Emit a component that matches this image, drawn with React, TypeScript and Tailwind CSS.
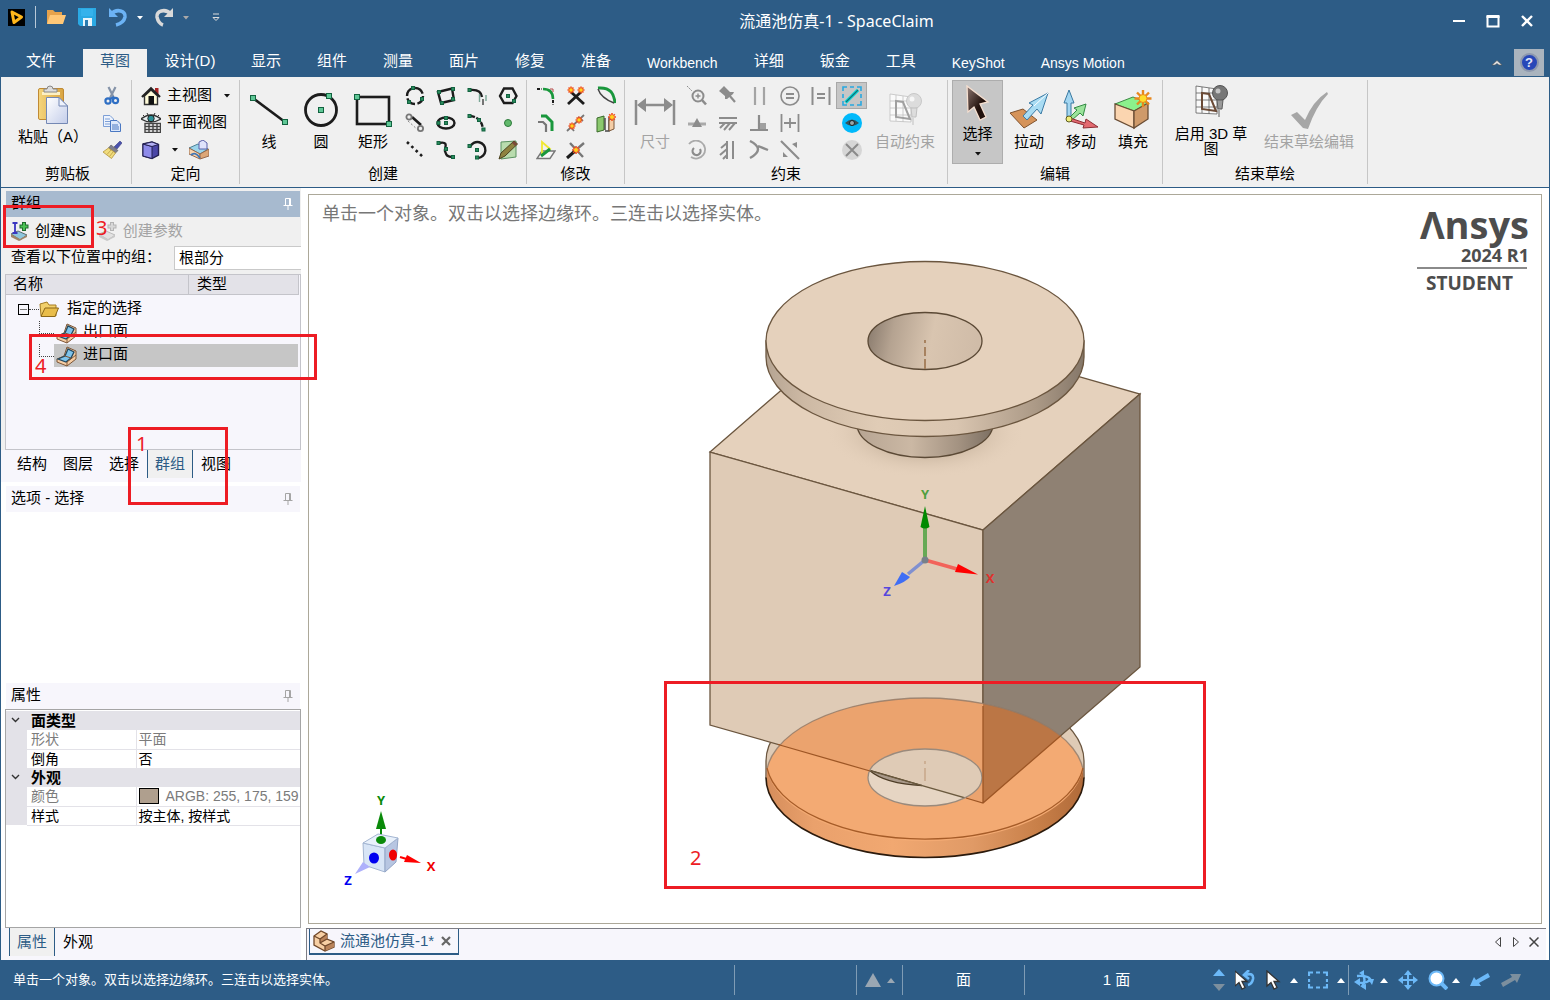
import type { ReactNode } from 'react'

type Kids = { children?: ReactNode }

const UI = "font-['Liberation_Sans','Noto_Sans_CJK_SC',sans-serif]"

/* ---------- small drawing helpers ---------- */

function Ico({ s = 20, v = 20, children }: { s?: number; v?: number } & Kids) {
  return (
    <svg width={s} height={s} viewBox={`0 0 ${v} ${v}`} fill="none" aria-hidden="true" className="shrink-0">
      {children}
    </svg>
  )
}

// green sketch handle
function H({ x, y, r = 1.5 }: { x: number; y: number; r?: number }) {
  return <rect x={x - r} y={y - r} width={r * 2} height={r * 2} fill={r > 2 ? '#5fc796' : '#2a8a5c'} stroke="#12623f" strokeWidth={1} />
}

function Caret({ up, color = '#111' }: { up?: boolean; color?: string }) {
  return (
    <svg width="8" height="5" viewBox="0 0 8 5" aria-hidden="true" className="shrink-0">
      <path d={up ? 'M0 5L4 0L8 5Z' : 'M1 1H7L4 4.5Z'} fill={color} />
    </svg>
  )
}

function Pin({ color }: { color: string }) {
  return (
    <svg width="10" height="12" viewBox="0 0 10 12" fill="none" stroke={color} aria-hidden="true">
      <path d="M2.5 7V.5H7.5V7M6.5 .5V7M.5 7.5H9.5M5 7.5V12" />
    </svg>
  )
}

function Burst({ x, y, r = 4 }: { x: number; y: number; r?: number }) {
  return (
    <g stroke="#f0501e" strokeWidth="1.6">
      <path d={`M${x - r} ${y}H${x + r}M${x} ${y - r}V${y + r}M${x - r * 0.7} ${y - r * 0.7}L${x + r * 0.7} ${y + r * 0.7}M${x + r * 0.7} ${y - r * 0.7}L${x - r * 0.7} ${y + r * 0.7}`} />
      <circle cx={x} cy={y} r={r * 0.5} fill="#ffd21e" stroke="none" />
    </g>
  )
}

/* ---------- ribbon icons ---------- */

const K = '#1c1c1c'
const G = '#8c8c8c'

const PasteIcon = () => (
  <Ico s={40} v={40}>
    <defs>
      <linearGradient id="clip" x2="1" y2="0"><stop stopColor="#f5d57c" /><stop offset="1" stopColor="#d9a441" /></linearGradient>
      <linearGradient id="sheet" x2="1" y2="1"><stop stopColor="#fff" /><stop offset="1" stopColor="#c3cdea" /></linearGradient>
    </defs>
    <rect x="5.5" y="3.5" width="25" height="31" rx="1.5" fill="url(#clip)" stroke="#c08a34" />
    <rect x="9" y="7" width="18" height="3" fill="#fdf0c4" />
    <path d="M11 7V4h3a3 3 0 0 1 6 0h4v3z" fill="#ddd" stroke="#888" />
    <path d="M13.5 12.5H26L34.5 21V38.5H13.5Z" fill="url(#sheet)" stroke="#7488b4" />
    <path d="M26 12.5V21H34.5Z" fill="#eef2fc" stroke="#7488b4" />
  </Ico>
)

const CutIcon = () => (
  <Ico>
    <path d="M6.5 1L12 12M13.5 1L8 12" stroke="#8593a8" strokeWidth="2.2" />
    <circle cx="6" cy="15" r="2.6" stroke="#2f6fc4" strokeWidth="2.2" />
    <circle cx="13.5" cy="14.5" r="2.6" stroke="#2f6fc4" strokeWidth="2.2" />
    <path d="M8 13L12 11" stroke="#2f6fc4" strokeWidth="2" />
  </Ico>
)

const CopyIcon = () => (
  <Ico>
    <path d="M1.5 2.5H8L11.500 6V13.5H1.5Z" fill="#edf3fd" stroke="#7d9fd6" />
    <path d="M3 6H8M3 8.5H8M3 11H8" stroke="#7d9fd6" />
    <path d="M8.5 7.5H15L18.500 11V18.5H8.5Z" fill="#dce8fb" stroke="#4a78c2" />
    <path d="M10 12H16M10 14H17M10 16H17" stroke="#4a78c2" />
  </Ico>
)

const BrushIcon = () => (
  <Ico>
    <path d="M12 7L18 1L20 3L15 9Z" fill="#4a52ad" stroke="#3c4080" strokeWidth=".6" />
    <path d="M9 5L16 10.5L13.5 13L6.5 8Z" fill="#80808e" stroke="#555" strokeWidth=".6" />
    <path d="M6.5 8L13.5 13L9.5 18.5L1 12Z" fill="#f0dc7d" stroke="#b4943a" strokeWidth=".8" />
    <path d="M5 14.5L9 10M7.5 16.5L11 12" stroke="#b4943a" strokeWidth=".7" />
  </Ico>
)

const HomeIcon = () => (
  <Ico>
    <rect x="14" y="2" width="3.5" height="7" fill="#a92525" />
    <path d="M3.5 10V18.5H16.5V10L10 4Z" fill="#fffbd9" stroke="#333" strokeWidth="1.4" />
    <path d="M1 11L10 2.5L19 11" stroke="#222" strokeWidth="2.4" />
    <rect x="7.5" y="10" width="5.5" height="8.5" fill="#111" />
  </Ico>
)

const PlanIcon = () => (
  <Ico>
    <path d="M0 6Q10 -2 20 6Q10 12 0 6Z" fill="#e8eef0" stroke="#333" strokeWidth="1.4" />
    <circle cx="10" cy="5.5" r="3.2" fill="#2c8f96" stroke="#222" />
    <path d="M2 2L4 4M6 0L7 2M14 0L13 2M18 2L16 4" stroke="#333" />
    <path d="M4 10.5H19.500V19.5H4ZM8 10.5V19.5M12 10.5V19.5M16 10.5V19.5M4 13.5H19.5M4 16.5H19.5" fill="#fff" stroke="#444" strokeWidth="1.4" />
  </Ico>
)

const CubeIcon = () => (
  <Ico>
    <path d="M2 4L11 2L17.5 4.5V15L11 18.5L2 16Z" fill="#4a46a8" stroke="#232052" strokeWidth="1.4" />
    <path d="M2 4L11 6.5V18.5L2 16Z" fill="#8e8bea" stroke="#232052" />
    <path d="M2 4L11 2L17.5 4.5L11 6.5Z" fill="#b3b0f4" stroke="#232052" />
  </Ico>
)

const SpinViewIcon = () => (
  <Ico>
    <path d="M0 8L9 4L19 9L11 14Z" fill="#9bd4ea" stroke="#4b7f96" />
    <path d="M0 8V14L11 19V14Z" fill="#f7d3ae" stroke="#96684a" />
    <path d="M11 14V19L20 16V9Z" fill="#dca676" stroke="#96684a" />
    <path d="M10 9V2L14 0L18 3V9Z" fill="#dfe3fb" stroke="#5a60a8" />
    <path d="M2 15Q6 11 11 18" stroke="#3b75b8" strokeWidth="1.8" />
  </Ico>
)

const LineIcon = () => (
  <Ico s={40} v={40}>
    <path d="M4 8L36 32" stroke={K} strokeWidth="2.6" />
    <H x={4} y={8} r={2.5} /><H x={36} y={32} r={2.5} />
  </Ico>
)
const CircleIcon = () => (
  <Ico s={40} v={40}>
    <circle cx="20" cy="20" r="15.5" stroke={K} strokeWidth="2.8" />
    <H x={20} y={20} r={2.5} /><H x={28} y={6} r={2.5} />
  </Ico>
)
const RectIcon = () => (
  <Ico s={40} v={40}>
    <rect x="4" y="7" width="32" height="27" stroke={K} strokeWidth="2.6" />
    <H x={4} y={7} r={2.5} /><H x={36} y={34} r={2.5} />
  </Ico>
)

const createTools: [string, ReactNode][] = [
  ['三点圆', <><circle cx="10" cy="10" r="8" stroke={K} strokeWidth="2.4" strokeDasharray="10 2.5" /><H x={8} y={2} /><H x={17} y={13} /><H x={4} y={16} /></>],
  ['三点矩形', <><path d="M2 6L16 2.5L18 14L5 17Z" stroke={K} strokeWidth="2.4" /><H x={3} y={6} /><H x={17} y={3} /><H x={17} y={13} /><H x={6} y={17} /></>],
  ['切线弧', <><path d="M3 4Q14 3 15 11" stroke={K} strokeWidth="2.4" /><path d="M12.5 8V16M19 9V15" stroke="#7aa796" strokeWidth="1.4" /><path d="M16 13V19" stroke="#555" strokeWidth="1.600" /><H x={2.5} y={4} /></>],
  ['多边形', <><path d="M6 2.5H14.5L18.5 10L14.5 17H6L2 10Z" stroke={K} strokeWidth="2.4" /><H x={10} y={10} /><H x={16} y={15} /></>],
  ['切线', <><path d="M7 4L16 12" stroke={K} strokeWidth="2.6" /><path d="M3 8L13 17" stroke="#888" strokeDasharray="2 2" /><circle cx="4" cy="4" r="2.6" stroke="#777" strokeWidth="1.8" /><circle cx="15.500" cy="15.500" r="2.6" stroke="#777" strokeWidth="1.8" /></>],
  ['椭圆', <><ellipse cx="10" cy="10" rx="8.5" ry="5.500" stroke={K} strokeWidth="2.4" /><H x={2.5} y={10} /><H x={10} y={10} /><H x={10} y={5} /></>],
  ['三点弧', <><path d="M3 3Q15 4 16 17" stroke={K} strokeWidth="2.4" strokeDasharray="5 1.5" /><H x={2.5} y={3} /><H x={12} y={7} /><H x={16.5} y={16.5} /></>],
  ['点', <circle cx="10" cy="10" r="3.5" fill="#62b96c" stroke="#2d7a3b" />],
  ['构造线', <path d="M2 2L18 17" stroke={K} strokeWidth="2.6" strokeDasharray="2.6 3.4" />],
  ['样条曲线', <><path d="M3 3C14 1 8 8 9 11S10 17 17 17" stroke={K} strokeWidth="2.4" /><H x={2.5} y={3} /><H x={10} y={9} /><H x={17} y={17} /></>],
  ['扫掠弧', <><path d="M3 7A8 8 0 1 1 11 18" stroke={K} strokeWidth="2.4" /><H x={2.5} y={6} /><H x={10} y={10} /><H x={10} y={17.5} /></>],
  ['面曲线', <><path d="M3 2L18 1V17L3 19Z" fill="#b9dcae" stroke="#5a9160" /><path d="M1 19L3 13L16 1L19.5 4L7 16Z" fill="#8e8340" stroke="#4a4220" /><path d="M16 1L19.5 4L17 6L14 3Z" fill="#7a4a38" /></>],
]

const modifyTools: [string, ReactNode][] = [
  ['圆角', <><path d="M1 3H6M17 14V19" stroke={K} strokeWidth="2" strokeDasharray="3 1.5" /><path d="M7 3Q17 3 17 13" stroke="#19973c" strokeWidth="2.6" /><path d="M14 3H17V6" stroke="#b84848" /></>],
  ['剪掉', <><path d="M2 18L15 6M18 18L5 6" stroke={K} strokeWidth="2.8" /><Burst x={5} y={4} r={3.5} /><Burst x={15} y={4} r={3.5} /></>],
  ['弯曲', <><path d="M2 2C15 1 18 8 19 17" stroke="#19973c" strokeWidth="3" /><path d="M2 3Q5 12 18 17" stroke="#444" strokeWidth="1.4" /></>],
  ['偏移曲线', <><path d="M5 3H10L16 9V18" stroke="#19973c" strokeWidth="3" /><path d="M2 9H7L10 12V19" stroke="#777" strokeWidth="2.2" /></>],
  ['分割曲线', <><path d="M1 18L18 2M4 13L8 18M12 4L17 8" stroke="#777" strokeWidth="1.8" /><Burst x={6} y={13} r={3.5} /><Burst x={13} y={7} r={3.5} /></>],
  ['投影', <><path d="M1 5L8 3V17L1 19Z" fill="#8bc86e" stroke="#3a6b2a" /><path d="M9 5V17M13 4V18H9" stroke="#444" strokeWidth="1.4" /><path d="M13 7L18 5V16L13 18Z" fill="#f4cda6" stroke="#7a5738" /><Burst x={16} y={4} r={4} /></>],
  ['投影到草图', <><path d="M6 11H19L14 18.5H1Z" fill="#f7f7f7" stroke="#777" strokeWidth="1.4" /><path d="M6 2V14L14 9Z" stroke="#f0e832" strokeWidth="1.800" /><path d="M5 16L14 9" stroke="#19973c" strokeWidth="3" /></>],
  ['延伸', <><path d="M1 18L9 11" stroke={K} strokeWidth="3" /><path d="M11 9L18 3M4 3L17 17" stroke="#777" strokeWidth="2.4" /><Burst x={10} y={10} r={4} /></>],
]

const constraintTools: [string, ReactNode][] = [
  ['放大', <><path d="M0 0L5 5" stroke={G} strokeDasharray="2 1" /><circle cx="11" cy="10" r="5.5" stroke={G} strokeWidth="2" /><path d="M15 14L19 18.5" stroke={G} strokeWidth="2.6" /><path d="M8.5 10H13.5M11 7.5V12.5" stroke={G} strokeWidth="1.400" /></>],
  ['固定', <><path d="M6 0L12 6L16 6L15 8L9 13L7 13L7 10L1 5Z" fill={G} /><path d="M11 9L17 16" stroke={G} strokeWidth="2.200" /></>],
  ['平行', <path d="M6 1V19M15 1V19" stroke="#a4a4a4" strokeWidth="2.2" />],
  ['等半径', <><circle cx="10" cy="10" r="9" stroke={G} strokeWidth="1.6" /><path d="M6 8H14M6 12H14" stroke={G} strokeWidth="2.2" /></>],
  ['等距离', <path d="M1.5 1V19M18.5 1V19M6 8H14M6 12H14" stroke={G} strokeWidth="2" />],
  ['中点', <><path d="M1 11H19" stroke="#aaa" strokeWidth="3" /><path d="M5 14L10 5L15 14Z" fill={G} /></>],
  ['水平', <path d="M1 5H19M1 10H19M7 10L2 15M12 10L6 17M17 10L11 17" stroke={G} strokeWidth="2" />],
  ['垂直', <><path d="M1 17H19M10 2V17" stroke={G} strokeWidth="2.2" /><rect x="11" y="10" width="6" height="6" fill="#a0a0a0" /></>],
  ['对称', <path d="M1.5 1V19M18.5 1V19M4 10H16M10 5V15" stroke={G} strokeWidth="1.8" />],
  ['同心', <><path d="M2 4A9 9 0 1 1 4 17" stroke="#aaa" strokeWidth="1.8" /><path d="M7 8A4 4 0 1 0 13 9" stroke={G} strokeWidth="2.2" /></>],
  ['竖直', <path d="M15 1V19M9 1V19M9 3L3 8M9 9L2 15M9 15L5 19" stroke={G} strokeWidth="2" />],
  ['相切', <path d="M1 1Q17 9 1 18M9 6L19 10" stroke={G} strokeWidth="2.4" />],
  ['共线', <><path d="M1 1L19 19" stroke={G} strokeWidth="2.2" /><path d="M12 4L17 2V8ZM3 12V17H8Z" fill={G} /></>],
]

// row by row, five to a row; the middle row has no fifth tool
const constraintRows: ([string, ReactNode] | null)[] = [...constraintTools.slice(0, 9), null, ...constraintTools.slice(9)]

const DimensionIcon = () => (
  <Ico s={44} v={44}>
    <path d="M3 12V37M41 12V37M8 17H36" stroke={G} strokeWidth="2.5" />
    <path d="M4 17L13 10V24ZM40 17L31 10V24Z" fill={G} />
  </Ico>
)

function SketchBulbIcon({ dim }: { dim?: boolean }) {
  const a = dim ? '#c0c0c0' : '#5d5d5d'
  return (
    <Ico s={40} v={40}>
      <path d="M5 4L26 7V32L5 31ZM5 11H26M5 18H26M5 25H26M11 5V31M18 6V32" stroke={a} strokeWidth=".8" fill="#fafafa" />
      <path d="M11 11L18 12L25 29L11 27Z" stroke={dim ? '#a0a0a0' : '#6b4a36'} strokeWidth="2" />
      <circle cx="29" cy="11" r="7.5" fill={dim ? '#dcdcdc' : '#777'} stroke={dim ? '#c8c8c8' : '#555'} />
      <circle cx="27" cy="9" r="2.5" fill={dim ? '#f6f6f6' : '#c4c4c4'} />
      <path d="M26 18H32L31 27H27ZM28 28V35" fill={dim ? '#ddd' : '#999'} stroke={a} />
    </Ico>
  )
}

const SelectIcon = () => (
  <Ico s={36} v={36}>
    <defs><linearGradient id="cur" x2="1" y2="1"><stop stopColor="#8e7770" /><stop offset=".6" stopColor="#22110c" /></linearGradient></defs>
    <path d="M7 1L8 27L14 22L20 35L26 32L20 19L28 17Z" fill="url(#cur)" stroke="#f5dfd0" strokeWidth="1.3" />
  </Ico>
)
const PullIcon = () => (
  <Ico s={40} v={40}>
    <path d="M1 23L14 19L28 30L15 38Z" fill="#d5935a" stroke="#80532f" />
    <path d="M14 26L24 15L20 13L39 3L32 24L28 19L18 30Z" fill="#a9dcf3" stroke="#3c7ba5" />
    <path d="M39 3L25 16" stroke="#fff" />
  </Ico>
)
const MoveIcon = () => (
  <Ico s={40} v={40}>
    <path d="M6 28V13H3L8 0L13 13H10V28Z" fill="#a3d6f1" stroke="#3878a0" />
    <path d="M9 27L16 20L13 18L25 14L22 26L19 23L11 30Z" fill="#9be39b" stroke="#328a44" />
    <path d="M9 28L24 33L25 29L37 37L22 38L23 35L9 31Z" fill="#e36a70" stroke="#8d2d34" />
    <circle cx="8" cy="29" r="3" fill="#f1ee7c" stroke="#5c5a1e" />
  </Ico>
)
const FillIcon = () => (
  <Ico s={40} v={40}>
    <path d="M2 14L20 7L35 13L21 21Z" fill="#8bf08c" stroke="#3d8a45" />
    <path d="M2 14L21 21V38L2 29Z" fill="#fbd5b0" stroke="#6a4d35" strokeWidth="1.3" />
    <path d="M21 21L35 13V29L21 38Z" fill="#cf9a6a" stroke="#6a4d35" strokeWidth="1.3" />
    <path d="M30 0V17M21.5 8.5H38.5M24 2.5L36 14.5M36 2.5L24 14.5" stroke="#e8871c" strokeWidth="2.4" />
    <circle cx="30" cy="8.500" r="4" fill="#ffdc28" stroke="#e8871c" />
  </Ico>
)
const CheckIcon = () => (
  <Ico s={40} v={40}>
    <path d="M2 25L8 22L16 30Q24 11 38 2L39 4Q27 16 19 39L14 38Z" fill="#a6a6a6" />
  </Ico>
)

/* ---------- ribbon building blocks ---------- */

function Group({ label, width, children }: { label: string; width: string } & Kids) {
  return (
    <section className={`flex h-[104px] shrink-0 flex-col border-r border-[#c6c6c6] ${width}`}>
      <div className="flex h-[84px]">{children}</div>
      <h2 className="text-center text-[15px] leading-[20px]">{label}</h2>
    </section>
  )
}

function Big({ icon, label, width = 'w-[52px]', pad = 'pt-[10px]', dim }: { icon: ReactNode; label: string; width?: string; pad?: string; dim?: boolean }) {
  return (
    <button className={`flex shrink-0 flex-col items-center ${pad} ${width} ${dim ? 'text-[#a3a3a3]' : ''}`}>
      <span className="flex h-10 items-center">{icon}</span>
      <span className="text-[15px] leading-[24px] whitespace-nowrap">{label}</span>
    </button>
  )
}

function ToolGrid({ tools, cols }: { tools: ([string, ReactNode] | null)[]; cols: string }) {
  return (
    <div className={`grid auto-rows-[27px] pt-[2px] ${cols}`}>
      {tools.map((t, i) =>
        t ? (
          <button key={i} aria-label={t[0]} className="flex items-center justify-center">
            <Ico>{t[1]}</Ico>
          </button>
        ) : (
          <span key={i} />
        ),
      )}
    </div>
  )
}

function Ribbon() {
  return (
    <div className="flex h-[111px] shrink-0 overflow-hidden border-b border-[#2d5c86] bg-[#f0f0f0] pt-[3px]">
      <Group label="剪贴板" width="w-[131px] pl-[3px]">
        <Big icon={<PasteIcon />} label="粘贴（A）" width="ml-1 w-[90px]" pad="pt-[5px]" />
        <div className="grid w-[28px] auto-rows-[27px] pt-[2px]">
          <button aria-label="剪切" className="flex items-center justify-center"><CutIcon /></button>
          <button aria-label="复制" className="flex items-center justify-center"><CopyIcon /></button>
          <button aria-label="格式刷" className="flex items-center justify-center"><BrushIcon /></button>
        </div>
      </Group>

      <Group label="定向" width="w-[108px]">
        <div className="grid auto-rows-[27px] pt-[2px] pl-[9px] text-[15px]">
          <button className="flex items-center gap-[6px]">
            <HomeIcon />主视图<span className="ml-[5px]"><Caret /></span>
          </button>
          <button className="flex items-center gap-[6px] whitespace-nowrap"><PlanIcon />平面视图</button>
          <div className="flex items-center gap-[10px]">
            <button aria-label="等轴测" className="flex items-center gap-[10px]"><CubeIcon /><Caret /></button>
            <button aria-label="转动视图"><SpinViewIcon /></button>
          </div>
        </div>
      </Group>

      <Group label="创建" width="w-[287px]">
        <div className="flex pl-[3px]">
          <Big icon={<LineIcon />} label="线" />
          <Big icon={<CircleIcon />} label="圆" />
          <Big icon={<RectIcon />} label="矩形" />
        </div>
        <ToolGrid tools={createTools} cols="grid-cols-[repeat(4,31px)]" />
      </Group>

      <Group label="修改" width="w-[98px]">
        <div className="pl-1">
          <ToolGrid tools={modifyTools} cols="grid-cols-[repeat(3,30px)]" />
        </div>
      </Group>

      <Group label="约束" width="w-[323px]">
        <Big icon={<DimensionIcon />} label="尺寸" width="w-[56px] pl-1" dim />
        <ToolGrid tools={constraintRows} cols="grid-cols-[repeat(5,31px)]" />
        <div className="grid w-[31px] auto-rows-[27px] pt-[2px]">
          <button aria-label="约束捕捉" className="flex items-center justify-center border border-[#a8a8a8] bg-[#c6c6c6]">
            <Ico>
              <path d="M5 1H1V5M15 1H19V5M5 19H1V15M15 19H19V15M1 8V12M19 8V12M8 1H12M8 19H12" stroke="#29a8e0" strokeWidth="1.6" />
              <path d="M3.5 16.5L16 4" stroke="#10d8d8" strokeWidth="3.5" />
              <path d="M4 16L16 4" stroke="#0b7378" strokeWidth="1.2" />
            </Ico>
          </button>
          <button aria-label="显示约束" className="flex items-center justify-center">
            <Ico>
              <circle cx="10" cy="10" r="10" fill="#00b9fb" />
              <path d="M3 10Q10 3 17 10Q10 16 3 10Z" fill="#35525c" />
              <circle cx="10" cy="10" r="2.5" fill="#9aa5a8" stroke="#16272c" />
            </Ico>
          </button>
          <button aria-label="删除约束" className="flex items-center justify-center">
            <Ico>
              <circle cx="10" cy="10" r="10" fill="#d6d6d6" />
              <path d="M4 4L16 16M16 4L4 16" stroke="#8a8a8a" strokeWidth="2" />
            </Ico>
          </button>
        </div>
        <Big icon={<SketchBulbIcon dim />} label="自动约束" width="w-[76px]" dim />
      </Group>

      <Group label="编辑" width="w-[215px]">
        <div className="flex pl-1">
          <button className="flex h-[84px] w-[51px] flex-col items-center border border-[#adadad] bg-[#c6c6c6] pt-1 text-[15px]">
            <SelectIcon />
            <span className="leading-[26px]">选择</span>
            <span className="flex h-3 items-center"><Caret /></span>
          </button>
          <Big icon={<PullIcon />} label="拉动" />
          <Big icon={<MoveIcon />} label="移动" />
          <Big icon={<FillIcon />} label="填充" />
        </div>
      </Group>

      <Group label="结束草绘" width="w-[205px]">
        <button className="flex w-[96px] flex-col items-center pt-[2px] text-[15px] leading-[15px]">
          <SketchBulbIcon />
          <span className="mt-1 whitespace-nowrap">启用 3D 草<br />图</span>
        </button>
        <Big icon={<CheckIcon />} label="结束草绘编辑" width="w-[100px]" dim />
      </Group>
    </div>
  )
}

/* ---------- title bar and tabs ---------- */

const iconBtn = 'flex items-center justify-center'

function TitleBar() {
  return (
    <header className="flex h-[42px] shrink-0 items-center text-white">
      <div className="flex h-[34px] w-[230px] items-center self-start pl-[7px]">
        <svg width="17" height="17" viewBox="0 0 17 17" aria-hidden="true">
          <rect width="17" height="17" fill="#000" />
          <path d="M4 3L13.5 8L6 13.5Z" fill="none" stroke="#ffb71b" strokeWidth="3" strokeLinejoin="round" />
        </svg>
        <span className="ml-[10px] h-[22px] w-px bg-[#b9c9d8]" />
        <button aria-label="打开" className={`${iconBtn} ml-[10px]`}>
          <Ico>
            <path d="M1 17V3H7L9 5H16V8" fill="#e6a24c" />
            <path d="M1 17L4 8H20L17 17Z" fill="#ffc777" />
          </Ico>
        </button>
        <button aria-label="保存" className={`${iconBtn} ml-[12px]`}>
          <Ico s={18} v={18}>
            <path d="M0 0H18V18H2L0 16Z" fill="#2aa9e4" />
            <rect x="3" y="1" width="12" height="7" fill="#35b2ec" />
            <rect x="5" y="10" width="9" height="8" fill="#e8f4fb" />
            <rect x="7" y="12" width="3" height="6" fill="#2a7bb0" />
          </Ico>
        </button>
        <button aria-label="撤销" className={`${iconBtn} ml-[12px] gap-[8px]`}>
          <Ico>
            <path d="M3 7C9 1 18 4 17 10C16 15 12 17 8 18" stroke="#6cb3f5" strokeWidth="3.6" />
            <path d="M1 1V10H10Z" fill="#6cb3f5" />
          </Ico>
          <Caret color="#fff" />
        </button>
        <button aria-label="重做" className={`${iconBtn} ml-[10px] gap-[8px]`}>
          <Ico>
            <path d="M17 7C11 1 2 4 3 10C4 15 6 17 9 18" stroke="#d9d9d9" strokeWidth="3.6" />
            <path d="M19 1V10H10Z" fill="#d9d9d9" />
          </Ico>
          <Caret color="#a9a9a9" />
        </button>
        <button aria-label="自定义快速访问工具栏" className={`${iconBtn} ml-[21px]`}>
          <Ico s={10} v={10}>
            <path d="M2 2H8M2 5.5H8L5 8.5Z" stroke="#ddd" />
          </Ico>
        </button>
      </div>
      <h1 className="min-w-0 flex-1 text-center font-['Noto_Sans','Noto_Sans_CJK_SC',sans-serif] text-[16px]">流通池仿真-1 - SpaceClaim</h1>
      <div className="flex w-[107px]">
        <button aria-label="最小化" className={`${iconBtn} w-[34px]`}>
          <Ico s={14} v={14}><path d="M1 7H13" stroke="#fff" strokeWidth="2" /></Ico>
        </button>
        <button aria-label="最大化" className={`${iconBtn} w-[34px]`}>
          <Ico s={14} v={14}><path d="M1.5 2V12.5H12.500V2" stroke="#fff" strokeWidth="2" /><path d="M.5 2.5H13.5" stroke="#fff" strokeWidth="3" /></Ico>
        </button>
        <button aria-label="关闭" className={`${iconBtn} w-[34px]`}>
          <Ico s={14} v={14}><path d="M2 2L12 12M12 2L2 12" stroke="#fff" strokeWidth="2.400" /></Ico>
        </button>
      </div>
    </header>
  )
}

const tabs = ['显示', '组件', '测量', '面片', '修复', '准备', 'Workbench', '详细', '钣金', '工具', 'KeyShot', 'Ansys Motion']

function RibbonTabs() {
  return (
    <nav className="mt-[7px] flex h-7 shrink-0 items-stretch text-white">
      <button className="mr-[9px] ml-[7px] w-[66px] pb-1 text-[15px]">文件</button>
      <button className="w-16 bg-[#f0f0f0] pb-1 text-[15px] text-[#2d5c86]">草图</button>
      <button className="w-[86px] pb-1 text-[15px]">设计(D)</button>
      {tabs.map((t) => (
        <button key={t} className={`px-[18px] whitespace-nowrap ${/^[A-Z]/.test(t) ? 'text-sm' : 'pb-1 text-[15px]'}`}>{t}</button>
      ))}
      <span className="flex-1" />
      <button aria-label="折叠功能区" className={`${iconBtn} mr-[12px]`}>
        <Ico s={10} v={10}><path d="M0 7L5 2.5L10 7H7L5 5.500L3 7Z" fill="#e6e6e6" stroke="#555" strokeWidth=".6" /></Ico>
      </button>
      <button aria-label="帮助" className={`${iconBtn} mr-[5px] h-[27px] w-[30px] bg-[#aab4be]`}>
        <span className="flex h-[19px] w-[19px] items-center justify-center rounded-full border-2 border-[#8d98ae] bg-[#2747b8] text-[13px] leading-none font-bold text-[#e4e9fb]">?</span>
      </button>
    </nav>
  )
}

/* ---------- left side ---------- */

function PaneTitle({ text, active }: { text: string; active?: boolean }) {
  return (
    <div className={`ml-[5px] mr-px flex h-[26px] shrink-0 items-center justify-between pr-[7px] pl-[5px] text-[15px] ${active ? 'bg-[#a7bacf]' : 'bg-[#f7f6fc]'}`}>
      <h2 className="pb-[3px] leading-[22px]">{text}</h2>
      <button aria-label="固定窗格"><Pin color={active ? '#fff' : '#a5a5a5'} /></button>
    </div>
  )
}

const CreateNsIcon = ({ dim }: { dim?: boolean }) => (
  <Ico>
    <path d="M1 13L8 10L17 14L10 19Z" fill={dim ? '#e2e2e2' : '#8ec6dd'} stroke={dim ? '#bbb' : '#5a6a70'} />
    <path d="M1 13V16L9 20L17 16V14L10 18Z" fill={dim ? '#c9c9c9' : '#a08468'} />
    {!dim && <path d="M2.5 2H7.5M5 2V12M2.5 12H7.5" stroke="#3a36c0" strokeWidth="1.8" />}
    <path d="M14 1V10M9.5 5.500H18.5" stroke={dim ? '#b4b4b4' : '#1f6b2c'} strokeWidth="4" />
    <path d="M14 2V9M10.5 5.500H17.5" stroke={dim ? '#d8d8d8' : '#4ac254'} strokeWidth="2" />
  </Ico>
)

const FolderIcon = () => (
  <Ico>
    <path d="M1 4L8 2L10 5H17V16H2Z" fill="#f2d06b" stroke="#a47b22" />
    <path d="M2 16.5L6 8H19.5L16 16.5Z" fill="#e9bd4a" stroke="#8c6718" />
  </Ico>
)

const FaceIcon = () => (
  <Ico s={22} v={22}>
    <path d="M1 14L8 11L11 2L20 6V14L11 21L1 17Z" fill="#f6cda4" stroke="#7d5637" />
    <path d="M2 14L9 11L12 4L18 7L15 13L10 17Z" fill="#7fc4ec" stroke="#23485f" strokeWidth="1.3" />
    <path d="M9 11L15 13M11 21V17L20 10" stroke="#7d5637" />
  </Ico>
)

function BottomTab({ label, active }: { label: string; active?: boolean }) {
  return (
    <button className={`h-7 w-[46px] text-[15px] leading-[24px] ${active ? 'border-x border-[#2d5c86] bg-[#f0f0f0] text-[#2d5c86]' : ''}`}>{label}</button>
  )
}

function Mark({ box, n, num }: { box: string; n: string; num: string }) {
  return (
    <div className={`pointer-events-none absolute z-10 border-3 border-[#ed1c24] ${box}`}>
      <span className={`absolute font-['Noto_Sans'] text-[20px] leading-[22px] text-[#ed1c24] ${num}`}>{n}</span>
    </div>
  )
}

function GroupsPane() {
  return (
    <section className="flex h-[294px] shrink-0 flex-col bg-[#f0f0f0] pt-[3px]">
      <PaneTitle text="群组" active />
      <div className="flex h-[28px] items-center pl-[9px] text-[15px]">
        <button className="flex items-center gap-[5px]"><CreateNsIcon />创建NS</button>
        <button className="ml-[12px] flex items-center gap-[5px] text-[#a3a3a3]" disabled><CreateNsIcon dim />创建参数</button>
      </div>
      <div className="flex h-[25px] items-center pl-[10px] text-[15px]">
        <label htmlFor="scope" className="w-[163px] whitespace-nowrap">查看以下位置中的组：</label>
        <select id="scope" className="h-6 min-w-0 flex-1 appearance-none border border-r-0 border-[#c9c9c9] bg-white px-1 leading-[20px]">
          <option>根部分</option>
        </select>
      </div>
      <div className="mt-1 ml-1 flex h-[176px] flex-col border border-[#c4c4ca] bg-[#f7f6fc] text-[15px]">
        <div className="mr-px flex h-5 shrink-0 border-b border-[#c4c4ca] bg-[#e3e2e8] leading-[18px]">
          <span className="w-[183px] border-r border-[#c4c4ca] pl-[7px]">名称</span>
          <span className="flex-1 border-r border-[#c4c4ca] pl-2">类型</span>
        </div>
        <ul className="pt-[3px] pl-[12px]">
          <li>
            <div className="flex h-[23px] items-center">
              <span className="flex h-[11px] w-[11px] items-center justify-center border border-black"><i className="h-px w-[7px] bg-[#777]" /></span>
              <span className="w-[10px] border-t border-dotted border-[#444]" />
              <FolderIcon />
              <span className="ml-2 pb-[2px]">指定的选择</span>
            </div>
            <ul className="ml-[21px]">
              {['出口面', '进口面'].map((name, i) => (
                <li key={name} className="flex h-[23px] items-start">
                  <span className="h-[13px] w-[15px] shrink-0 border-b border-l border-dotted border-[#444]" />
                  <span className={`mr-[2px] flex h-full flex-1 items-center pl-[2px] ${i ? 'bg-[#c6c6c6]' : ''}`}>
                    <FaceIcon /><span className="ml-[5px] pb-[3px]">{name}</span>
                  </span>
                </li>
              ))}
            </ul>
          </li>
        </ul>
      </div>
      <div className="flex h-8 items-start bg-[#f7f6fc] pl-[8px]">
        <BottomTab label="结构" /><BottomTab label="图层" /><BottomTab label="选择" /><BottomTab label="群组" active /><BottomTab label="视图" />
      </div>
    </section>
  )
}

const props: { group: string; rows: [string, string, boolean][] }[] = [
  { group: '面类型', rows: [['形状', '平面', true], ['倒角', '否', false]] },
  { group: '外观', rows: [['颜色', 'ARGB: 255, 175, 159', true], ['样式', '按主体, 按样式', false]] },
]

function PropertiesPane() {
  return (
    <section className="flex h-[277px] shrink-0 flex-col">
      <PaneTitle text="属性" />
      <div className="ml-1 h-[219px] overflow-hidden border border-[#a5a5a5] bg-white pt-px">
        <table className="w-full table-fixed border-collapse text-sm">
          <colgroup><col className="w-[21px]" /><col className="w-[109px]" /><col /></colgroup>
          {props.map((p) => (
            <tbody key={p.group}>
              <tr className="h-[19px] bg-[#e3e2e8]">
                <td className="p-0">
                  <svg width="18" height="8" viewBox="0 0 18 8" fill="none" aria-hidden="true"><path d="M6 1L9.5 4.5L13 1" stroke="#333" strokeWidth="1.4" /></svg>
                </td>
                <th colSpan={2} className="p-0 pl-1 text-left text-[15px] leading-[18px] font-bold">{p.group}</th>
              </tr>
              {p.rows.map(([k, v, dim]) => (
                <tr key={k} className={`h-[19px] ${dim ? 'text-[#7b7b7b]' : ''}`}>
                  <td className="bg-[#e3e2e8] p-0" />
                  <td className="border-r border-b border-[#e3e2e8] p-0 pl-1 leading-[18px]">{k}</td>
                  <td className="border-b border-[#e3e2e8] p-0 pl-[2px] leading-[18px] whitespace-nowrap">
                    {k === '颜色' ? (
                      <span className="flex items-center gap-[7px]"><i className="h-4 w-5 shrink-0 border border-black bg-[#af9f8e]" />{v}</span>
                    ) : v}
                  </td>
                </tr>
              ))}
            </tbody>
          ))}
        </table>
      </div>
      <div className="flex h-8 items-start bg-[#f7f6fc] pl-[8px]">
        <BottomTab label="属性" active /><BottomTab label="外观" />
      </div>
    </section>
  )
}

/* ---------- 3D view ---------- */

const TOP_RIM = 'M766 768Q768 775 772 783A159 80 0 0 0 1078 783Q1082 775 1084 768V777.5A159 80 0 0 1 766 777.5Z'
const RING = 'M766 777.5A159 79.5 0 1 1 1084 777.5A159 79.5 0 1 1 766 777.5ZM868 777.5A57 28.5 0 1 0 982 777.5A57 28.5 0 1 0 868 777.5Z'
const FRONT = 'M710 452L983 530V803L710 725Z'
const SIDE = 'M983 530L1140 394V667L983 803Z'

function Model() {
  return (
    <svg width="450" height="620" viewBox="700 250 450 620" fill="none" role="img" aria-label="流通池" strokeWidth="1.3" className="shrink-0">
      <defs>
        <linearGradient id="rim" x2="1" y2="0"><stop stopColor="#b5a492" /><stop offset=".12" stopColor="#cdb9a4" /><stop offset=".35" stopColor="#e0ccb6" /><stop offset=".6" stopColor="#d9c5b0" /><stop offset=".85" stopColor="#ab9986" /><stop offset="1" stopColor="#857769" /></linearGradient>
        <linearGradient id="bore" x2="1" y2=".1"><stop stopColor="#85776a" /><stop offset=".25" stopColor="#b5a391" /><stop offset=".6" stopColor="#d9c5b0" /><stop offset="1" stopColor="#d0bca8" /></linearGradient>
        <linearGradient id="neck" x2="1" y2="0"><stop stopColor="#b7a593" /><stop offset=".4" stopColor="#cbb8a4" /><stop offset=".75" stopColor="#a39281" /><stop offset="1" stopColor="#7c6f62" /></linearGradient>
        <linearGradient id="hotRim" x2="1" y2="0"><stop stopColor="#d58d5b" /><stop offset=".15" stopColor="#eaa16c" /><stop offset=".4" stopColor="#f1a871" /><stop offset=".65" stopColor="#e09a66" /><stop offset=".85" stopColor="#c98049" /><stop offset="1" stopColor="#b06a39" /></linearGradient>
        <radialGradient id="shade"><stop offset=".5" stopColor="#bda993" /><stop offset="1" stopColor="#e5d1bc" stopOpacity="0" /></radialGradient>
        <clipPath id="cf"><path d={FRONT} /></clipPath>
        <clipPath id="cs"><path d={SIDE} /></clipPath>
        <clipPath id="ch"><ellipse cx="925" cy="777.5" rx="57" ry="28.5" /></clipPath>
        <clipPath id="ctop"><path d="M710 452L867 316L1140 394L983 530Z" /></clipPath>
      </defs>

      {/* lower flange behind the block */}
      <path d="M766 777.5V761A159 80 0 0 1 1084 761V777.5Z" fill="#dfcbb6" stroke="#6b563f" />
      {/* block */}
      <path d="M710 452L867 316L1140 394L983 530Z" fill="#e5d1bc" stroke="#6b563f" />
      <g clipPath="url(#ctop)"><ellipse cx="925" cy="432" rx="100" ry="46" fill="url(#shade)" opacity=".6" /></g>
      <path d={FRONT} fill="#dfcbb6" stroke="#6b563f" />
      <path d={SIDE} fill="#8f8173" stroke="#6b563f" />
      {/* selected face */}
      <path d={RING} fill="#f3aa73" fillRule="evenodd" />
      <path d={RING} fill="#eba36e" fillRule="evenodd" clipPath="url(#cf)" />
      <path d={RING} fill="#bb7645" fillRule="evenodd" clipPath="url(#cs)" />
      <g clipPath="url(#ch)">
        <rect x="860" y="740" width="130" height="75" fill="#e6d5c3" />
        <path d={FRONT} fill="#dfcbb6" />
        <path d="M869 770Q885 784 922 785.5Z" fill="#a9998a" stroke="#4e3d26" />
        <path d="M710 725L983 803" stroke="#6b5a3f" />
      </g>
      <path d={TOP_RIM} fill="url(#hotRim)" />
      <path d="M766 777.5A159 79.5 0 0 1 1084 777.5" stroke="#8a7768" strokeOpacity=".75" />
      <path d="M766 777.5A159 80 0 0 0 1084 777.5" stroke="#2b1a0c" strokeWidth="1.6" />
      <path d="M767 768A159 80 0 0 0 1083 768" stroke="#a65c28" />
      <ellipse cx="925" cy="777.5" rx="57" ry="28.5" stroke="#9a8a7c" />
      <path d="M778 744.500L870 771M966 798L983 803L1061 735.5M983 803V706" stroke="#9d5625" />
      <path d="M925 761V764M925 768V781" stroke="#c9a98c" strokeWidth="1.6" />

      {/* neck and upper flange */}
      <path d="M857 424A68 33.5 0 0 0 993 424Z" fill="url(#neck)" stroke="#5b4935" />
      <path d="M766 341V357A159 79.5 0 0 0 1084 357V341Z" fill="url(#rim)" stroke="#6b563f" />
      <ellipse cx="925" cy="341" rx="159" ry="79.5" fill="#e5d1bc" stroke="#6b563f" />
      <ellipse cx="925" cy="341" rx="57" ry="28.5" fill="url(#bore)" stroke="#5b4935" />
      <path d="M925 340V343M925 347V356M925 359V369" stroke="#a37c58" strokeWidth="1.8" />

      {/* origin triad */}
      <path d="M925 560V528" stroke="#67a955" strokeWidth="4" />
      <path d="M925 506L929.5 527Q925 530 920.5 527Z" fill="#008a00" />
      <path d="M925 560L957 569" stroke="#f2635a" strokeWidth="3.5" />
      <path d="M978 574.5L955 572L958 564Z" fill="#f00" />
      <path d="M925 560L908 574" stroke="#8090d0" strokeWidth="3.5" />
      <path d="M894 586L902 572L910 577Q906 582 894 586Z" fill="#3f6ef5" />
      <circle cx="925" cy="560" r="3.5" fill="#77808a" />
      <g className="font-['Open_Sans',sans-serif] text-[13px] font-bold" textAnchor="middle">
        <text x="925" y="499" fill="#4f9f3f">Y</text>
        <text x="990" y="583" fill="#e0302c">X</text>
        <text x="887" y="596" fill="#5648dc">Z</text>
      </g>
    </svg>
  )
}

function ViewTriad() {
  return (
    <svg width="100" height="100" viewBox="340 790 100 100" fill="none" aria-hidden="true" className="absolute bottom-[33px] left-[31px]">
      <path d="M381 850V826" stroke="#0a8a0a" strokeWidth="2" />
      <path d="M381 811L386 829H376Z" fill="#0a8a0a" />
      <path d="M363 843L385 848V872L364 865Z" fill="#d8e5f6" stroke="#a4b6d2" />
      <path d="M385 848L398 838L396 862L385 872Z" fill="#b7c6e2" stroke="#93a5c6" />
      <path d="M363 843L378 834L398 838L385 848Z" fill="#e9f1fb" stroke="#a4b6d2" />
      <ellipse cx="381" cy="840" rx="5" ry="4" fill="#0a8a0a" />
      <ellipse cx="374" cy="858" rx="5" ry="5.5" fill="#0000f0" />
      <ellipse cx="393" cy="855" rx="4" ry="5.5" fill="#f00000" />
      <path d="M400 857L410 860" stroke="#f00" strokeWidth="2" />
      <path d="M421 863L404 862L407 855Z" fill="#f00" />
      <path d="M355 874L363 862L370 867Z" fill="#aeb0fb" />
      <g className="font-['Open_Sans',sans-serif] text-[13px] font-bold" textAnchor="middle">
        <text x="381" y="805" fill="#0a8a0a">Y</text>
        <text x="431" y="871" fill="#f00000">X</text>
        <text x="348" y="885" fill="#0000f0">Z</text>
      </g>
    </svg>
  )
}

function Viewport() {
  return (
    <main className="relative mx-[7px] mt-[6px] flex min-h-0 flex-1 items-center justify-center overflow-hidden border border-[#aca899] bg-white pt-[2px]">
      <Model />
      <p className="absolute top-[6px] left-[13px] text-[18px] leading-[26px] text-[#777]">单击一个对象。双击以选择边缘环。三连击以选择实体。</p>
      <div className="absolute top-[9px] right-[12px] flex w-[112px] flex-col items-end font-['Open_Sans','Noto_Sans',sans-serif] font-bold text-[#4d4d4d]">
        <span aria-label="Ansys" className="text-[38px] leading-[40px]">Λnsys</span>
        <span className="text-lg leading-[22px]">2024 R1</span>
        <span className="mt-[1px] mr-[2px] h-[2px] w-[110px] bg-[#8a8a8a]" />
        <span className="mr-[16px] text-[19px] leading-[29px]">STUDENT</span>
      </div>
      <ViewTriad />
      <Mark box="left-[355px] top-[486px] h-[208px] w-[542px]" n="2" num="left-[23px] top-[163px]" />
    </main>
  )
}

function DocumentTabs() {
  return (
    <div className="mr-[3px] ml-[5px] flex h-8 shrink-0 items-start border-t border-l border-[#7d7d85] bg-[#f7f6fc]">
      <div className="ml-[2px] flex h-[26px] w-[150px] items-center border-x border-b-2 border-[#2d5c86] pl-[3px] text-[15px] text-[#2d5c86]">
        <Ico s={22} v={22}>
          <path d="M1 6L8 1L14 4V9L21 12V17L12 21L1 15Z" fill="#f7cfa4" stroke="#70482a" strokeWidth="1.3" />
          <path d="M12 16L21 12V17L12 21ZM7 9L14 4V9L7 13Z" fill="#b9835a" />
          <path d="M1 6L7 9L14 4M7 9V13L12 16L21 12M12 16V21M7 13L14 9" stroke="#70482a" strokeWidth="1.3" />
        </Ico>
        <button className="ml-[5px] whitespace-nowrap">流通池仿真-1*</button>
        <button aria-label="关闭文档" className="ml-[7px]"><Ico s={10} v={10}><path d="M1 1L9 9M9 1L1 9" stroke="#666" strokeWidth="2.2" /></Ico></button>
      </div>
      <span className="flex-1" />
      <div className="flex h-[25px] items-center gap-[8px] pr-[7px]">
        <button aria-label="上一个"><Ico s={10} v={10}><path d="M7.5 .5V9.5L2.5 5Z" stroke="#444" /></Ico></button>
        <button aria-label="下一个"><Ico s={10} v={10}><path d="M2.5 .5V9.5L7.5 5Z" stroke="#444" /></Ico></button>
        <button aria-label="关闭"><Ico s={10} v={10}><path d="M.5 .5L9.5 9.5M9.5 .5L.5 9.5" stroke="#444" strokeWidth="1.5" /></Ico></button>
      </div>
    </div>
  )
}

/* ---------- status bar ---------- */

const B = '#6cb9f8'
const Cursor = () => <path d="M3 1V16L7 12.5L10 19L13 17.5L10 11.5H15Z" fill="#fff" stroke="#333" strokeWidth="1.3" />

function StatusBar() {
  const sep = 'h-[30px] border-l border-[#7f9cb5]'
  return (
    <footer className="flex h-10 shrink-0 items-center text-white">
      <p className="min-w-0 flex-1 truncate pl-3 text-[13px]">单击一个对象。双击以选择边缘环。三连击以选择实体。</p>
      <span className={`${sep} w-[122px]`} />
      <button aria-label="消息" className={`${sep} ${iconBtn} w-[46px] gap-[5px]`}>
        <Ico s={18} v={18}><path d="M9 2L17 16H1Z" fill="#9aa7b3" /></Ico><Caret up color="#9aa7b3" />
      </button>
      <span className={`${sep} ${iconBtn} w-[122px] text-[15px]`}>面</span>
      <span className={`${sep} ${iconBtn} w-[184px] text-[15px]`}>1 面</span>
      <button aria-label="上移或下移" className={`${iconBtn} w-[22px]`}>
        <svg width="12" height="24" viewBox="0 0 12 24"><path d="M0 8L6 1L12 8Z" fill={B} /><path d="M0 16L6 23L12 16Z" fill="#7c8f9e" /></svg>
      </button>
      <button aria-label="恢复选择" className={`${iconBtn} w-[30px]`}>
        <Ico><path d="M10 5Q19 2 18 9Q17 14 13 15M14 0L9 5L14 9" stroke={B} strokeWidth="2.6" /><g transform="translate(-3 0)"><Cursor /></g></Ico>
      </button>
      <button aria-label="选择模式" className={`${iconBtn} w-[28px]`}><Ico><Cursor /></Ico></button>
      <button aria-label="选择模式菜单" className={`${iconBtn} w-3`}><Caret up color="#fff" /></button>
      <button aria-label="框选" className={`${iconBtn} w-[35px]`}>
        <Ico><path d="M1 6V2.5H5M8 2.5H12M15 2.5H19V6M19 9V12M19 14V17.5H15M12 17.5H8M5 17.5H1V14M1 12V9" stroke={B} strokeWidth="2.2" /></Ico>
      </button>
      <button aria-label="框选菜单" className={`${iconBtn} mr-px w-3`}><Caret up color="#fff" /></button>
      <button aria-label="转动" className={`${sep} ${iconBtn} w-[30px]`}>
        <Ico><path d="M3 6Q17 5 17 12M8 3Q13 10 8 17M3 12Q11 15 17 9" stroke={B} strokeWidth="2.4" /><path d="M0 12L6 8V16ZM14 9H20L18 15ZM5 3L10 0V6ZM6 16L12 20L12 14Z" fill={B} /></Ico>
      </button>
      <button aria-label="转动菜单" className={`${iconBtn} w-3`}><Caret up color="#fff" /></button>
      <button aria-label="平移" className={`${iconBtn} w-[36px]`}>
        <Ico><path d="M10 2V18M2 10H18" stroke={B} strokeWidth="2" /><path d="M10 0L14 5H6ZM10 20L14 15H6ZM0 10L5 6V14ZM20 10L15 6V14Z" fill={B} /></Ico>
      </button>
      <button aria-label="缩放" className={`${iconBtn} w-6`}>
        <Ico><path d="M13 13L19 19" stroke={B} strokeWidth="4" /><circle cx="8.5" cy="8.5" r="7" fill="#fff" stroke={B} strokeWidth="2" /></Ico>
      </button>
      <button aria-label="缩放菜单" className={`${iconBtn} w-3`}><Caret up color="#fff" /></button>
      <button aria-label="上一视图" className={`${iconBtn} w-[36px]`}>
        <Ico><path d="M0 16L4 7L6 10L18 3L20 7L9 13L11 16Z" fill={B} /></Ico>
      </button>
      <button aria-label="下一视图" className={`${iconBtn} mr-[25px] w-[26px]`}>
        <Ico><path d="M20 4L16 13L14 10L2 17L0 13L11 7L9 4Z" fill="#7c8f9e" /></Ico>
      </button>
    </footer>
  )
}

export default function App() {
  return (
    <div className={`flex h-screen flex-col overflow-hidden bg-[#2d5c86] px-px text-black ${UI}`}>
      <TitleBar />
      <RibbonTabs />
      <Ribbon />
      <div className="flex min-h-0 flex-1 bg-white">
        <aside className="relative flex w-[300px] shrink-0 flex-col">
          <GroupsPane />
          <div className="mt-1 min-h-0 flex-1"><PaneTitle text="选项 - 选择" /></div>
          <PropertiesPane />
          <Mark box="left-[2px] top-[17px] h-[43px] w-[91px]" n="3" num="left-[90px] top-[9px]" />
          <Mark box="left-[28px] top-[146px] h-[46px] w-[288px]" n="4" num="left-[3px] top-[18px]" />
          <Mark box="left-[127px] top-[239px] h-[78px] w-[100px]" n="1" num="left-[5px] top-[3px]" />
        </aside>
        <div className="flex min-w-0 flex-1 flex-col">
          <Viewport />
          <div className="h-1 shrink-0" />
          <DocumentTabs />
        </div>
      </div>
      <StatusBar />
    </div>
  )
}
